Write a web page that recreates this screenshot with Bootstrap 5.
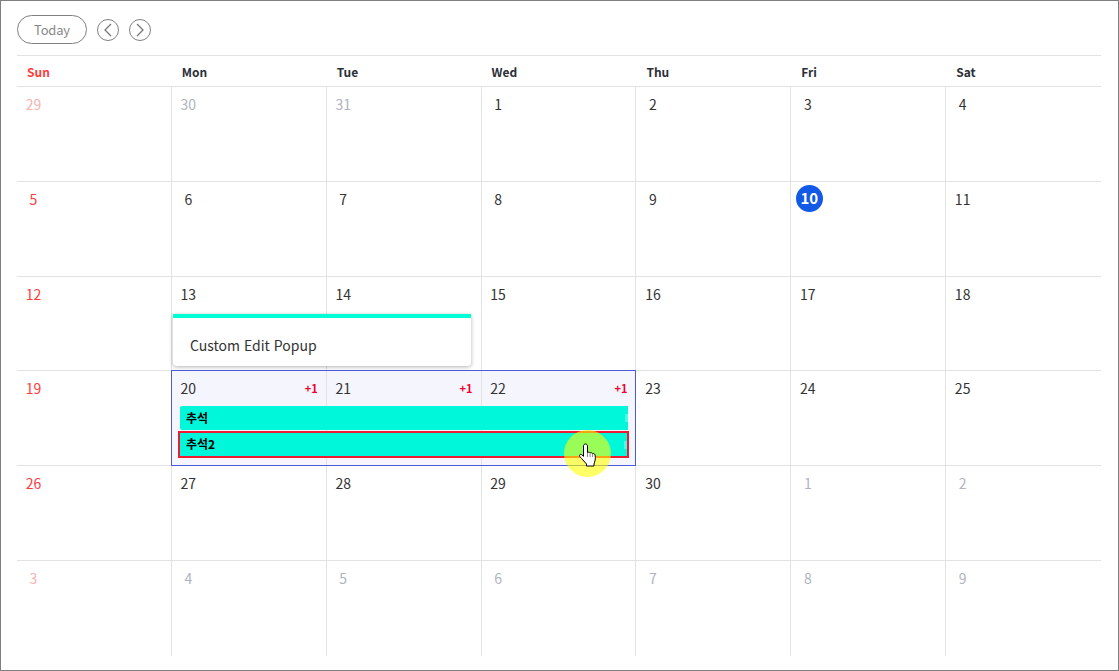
<!DOCTYPE html>
<html lang="ko">
<head>
<meta charset="utf-8">
<title>Calendar</title>
<link href="https://cdn.jsdelivr.net/npm/bootstrap@5.3.0/dist/css/bootstrap.min.css" rel="stylesheet">
<style>
html,body{height:100%;margin:0;overflow:hidden}
body{font-family:"Noto Sans CJK KR","Noto Sans",sans-serif;color:#333;background:#fff}
.frame{width:1119px;height:671px;border:1px solid #7f7f7f;padding:14px 16px 0 16px;position:relative;overflow:hidden}
.tool-bar{height:40px;gap:10px;align-items:flex-start}
.today-btn{width:70px;height:29px;padding:0;border:1px solid #808080;border-radius:15px;background:#fff;color:#888;font-size:13px;letter-spacing:-.2px;line-height:26px}
.nav-circle{width:22px;height:22px;padding:0;margin-top:4px;border:1px solid #808080;border-radius:50%;background:#fff;display:flex;align-items:center;justify-content:center}
.cal-box{width:1084px}
.week-head,.week-row{display:grid;grid-template-columns:repeat(7,1fr)}
.week-head{height:32px;border-top:1px solid #e2e2e2;border-bottom:1px solid #e2e2e2}
.head-cell{padding-left:10px;font-size:12px;font-weight:700;line-height:32px;color:#2b2f38}
.head-cell.sun{color:#ff3b3b}
.weeks{height:568.8px;position:relative;display:grid;grid-auto-rows:1fr}
.week-row{border-bottom:1px solid #e2e2e2}
.week-row.final{border-bottom:0}
.day-cell{border-right:1px solid #e2e2e2;padding:5px 0 0 4.5px;display:flex;justify-content:space-between;align-items:flex-start;min-width:0}
.day-cell:last-child{border-right:0}
.day-cell.picked{background:#f5f5fd}
.day-num{width:24px;height:24px;font-size:14px;line-height:24px;text-align:center;color:#333}
.day-num.sun{color:#ff3b3b}
.day-num.old{color:#b0b3bd}
.day-num.old.sun{color:#f9b2ae}
.day-num.today{width:27px;height:27px;line-height:26px;margin:-2px 0 0 0;border-radius:50%;background:#1259e6;color:#fff;font-weight:700;font-size:15px}
.more-tag{font-size:11px;font-weight:700;line-height:24px;color:#f0002c;padding-right:8px}
.pick-box{position:absolute;left:154px;top:283px;width:465px;height:96px;border:1px solid #4d5bd8;pointer-events:none}
.evt{position:absolute;background:#00f7da;color:#000;font-size:12px;font-weight:700;display:flex;align-items:center}
.evt.one{left:163px;top:319px;width:448px;height:24px;padding-left:6px;border-radius:2px 0 0 2px}
.evt.two{left:161px;top:344px;width:451px;height:27px;padding:0 0 1px 6px;border:2px solid #ee1b33}
.grip{position:absolute;right:0;top:8px;width:3px;height:8px;opacity:.3;background-image:radial-gradient(#fff 50%,transparent 50%);background-size:2px 2px}
.edit-pop{position:absolute;left:156px;top:227px;width:298px;height:52px;background:#fff;border-top:4px solid #00ffd5;border-radius:0 0 4px 4px;box-shadow:0 1px 4px rgba(0,0,0,.3);padding-left:17px;font-size:14px;line-height:54px;color:#333}
.spot{position:absolute;left:546.5px;top:343px;width:47px;height:47px;border-radius:50%;background:rgba(255,255,0,.6)}
.hand-cursor{position:absolute;left:562px;top:356px;width:18px;height:24px}
</style>
</head>
<body>
<div class="frame">
  <div class="d-flex tool-bar">
    <button class="today-btn" type="button">Today</button>
    <button class="nav-circle" type="button" aria-label="prev"><svg width="10" height="14" viewBox="0 0 10 14"><path d="M8 1 2 7l6 6" fill="none" stroke="#777" stroke-width="1.3"/></svg></button>
    <button class="nav-circle" type="button" aria-label="next"><svg width="10" height="14" viewBox="0 0 10 14"><path d="M2 1l6 6-6 6" fill="none" stroke="#777" stroke-width="1.3"/></svg></button>
  </div>
  <div class="cal-box">
    <div class="week-head">
      <div class="head-cell sun">Sun</div><div class="head-cell">Mon</div><div class="head-cell">Tue</div><div class="head-cell">Wed</div><div class="head-cell">Thu</div><div class="head-cell">Fri</div><div class="head-cell">Sat</div>
    </div>
    <div class="weeks">
      <div class="week-row">
        <div class="day-cell"><span class="day-num old sun">29</span></div><div class="day-cell"><span class="day-num old">30</span></div><div class="day-cell"><span class="day-num old">31</span></div><div class="day-cell"><span class="day-num">1</span></div><div class="day-cell"><span class="day-num">2</span></div><div class="day-cell"><span class="day-num">3</span></div><div class="day-cell"><span class="day-num">4</span></div>
      </div>
      <div class="week-row">
        <div class="day-cell"><span class="day-num sun">5</span></div><div class="day-cell"><span class="day-num">6</span></div><div class="day-cell"><span class="day-num">7</span></div><div class="day-cell"><span class="day-num">8</span></div><div class="day-cell"><span class="day-num">9</span></div><div class="day-cell"><span class="day-num today">10</span></div><div class="day-cell"><span class="day-num">11</span></div>
      </div>
      <div class="week-row">
        <div class="day-cell"><span class="day-num sun">12</span></div><div class="day-cell"><span class="day-num">13</span></div><div class="day-cell"><span class="day-num">14</span></div><div class="day-cell"><span class="day-num">15</span></div><div class="day-cell"><span class="day-num">16</span></div><div class="day-cell"><span class="day-num">17</span></div><div class="day-cell"><span class="day-num">18</span></div>
      </div>
      <div class="week-row">
        <div class="day-cell"><span class="day-num sun">19</span></div>
        <div class="day-cell picked"><span class="day-num">20</span><span class="more-tag">+1</span></div>
        <div class="day-cell picked"><span class="day-num">21</span><span class="more-tag">+1</span></div>
        <div class="day-cell picked"><span class="day-num">22</span><span class="more-tag">+1</span></div>
        <div class="day-cell"><span class="day-num">23</span></div><div class="day-cell"><span class="day-num">24</span></div><div class="day-cell"><span class="day-num">25</span></div>
      </div>
      <div class="week-row">
        <div class="day-cell"><span class="day-num sun">26</span></div><div class="day-cell"><span class="day-num">27</span></div><div class="day-cell"><span class="day-num">28</span></div><div class="day-cell"><span class="day-num">29</span></div><div class="day-cell"><span class="day-num">30</span></div><div class="day-cell"><span class="day-num old">1</span></div><div class="day-cell"><span class="day-num old">2</span></div>
      </div>
      <div class="week-row final">
        <div class="day-cell"><span class="day-num old sun">3</span></div><div class="day-cell"><span class="day-num old">4</span></div><div class="day-cell"><span class="day-num old">5</span></div><div class="day-cell"><span class="day-num old">6</span></div><div class="day-cell"><span class="day-num old">7</span></div><div class="day-cell"><span class="day-num old">8</span></div><div class="day-cell"><span class="day-num old">9</span></div>
      </div>
      <div class="pick-box"></div>
      <div class="evt one">추석<span class="grip"></span></div>
      <div class="evt two">추석2<span class="grip"></span></div>
      <div class="edit-pop">Custom Edit Popup</div>
      <div class="spot"></div>
      <svg class="hand-cursor" viewBox="0 0 18 24"><path d="M6.500 1C7.800 1 8.500 2 8.500 3V9.500c1-.5 2-.4 2.600.4 1-.4 2-.2 2.500.7 1-.3 2.100.1 2.400 1.100.5 1.600.5 3.800.2 5.300-.3 1.500-.9 2.800-1.200 4V23H7.500v-2L2.500 15.500C1.500 14.400.5 13.500.5 12.500c0-1 1.200-1.500 2.200-.8l1.800 1.600V3C4.500 2 5.200 1 6.500 1Z" fill="#fff" stroke="#000" stroke-width="1"/><path d="M8.500 10v4M11.100 10.500V14M13.600 11v3" stroke="#555" stroke-width=".7"/></svg>
    </div>
  </div>
</div>
<script src="https://cdn.jsdelivr.net/npm/bootstrap@5.3.0/dist/js/bootstrap.bundle.min.js"></script>
</body>
</html>
